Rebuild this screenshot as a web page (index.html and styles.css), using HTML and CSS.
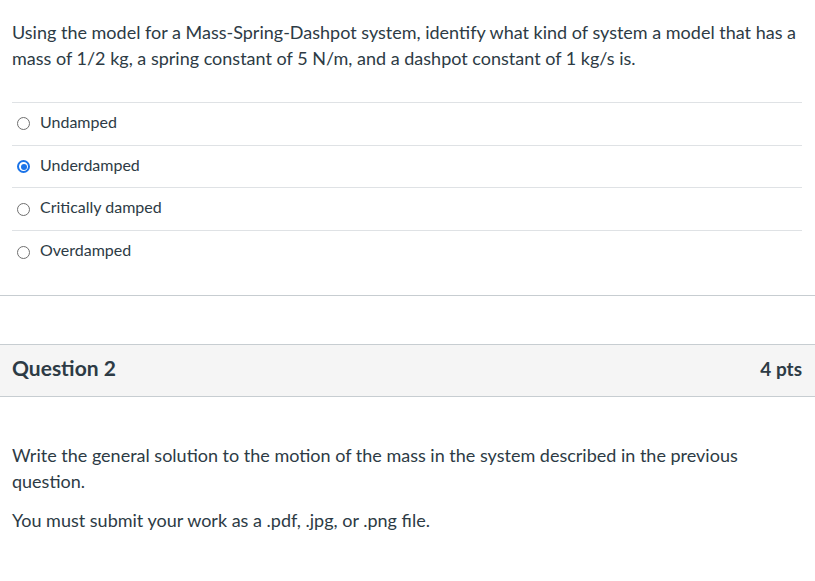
FILE: index.html
```html
<!DOCTYPE html>
<html>
<head>
<meta charset="utf-8">
<link rel="stylesheet" href="styles.css">
</head>
<body>
<div class="quiz">
  <section class="question first">
    <div class="q-text">Using the model for a Mass-Spring-Dashpot system, identify what kind of system a model that has a mass of 1/2 kg, a spring constant of 5 N/m, and a dashpot constant of 1 kg/s is.</div>
    <div class="answers">
      <label class="answer"><span class="radio"></span><span class="label">Undamped</span></label>
      <label class="answer"><span class="radio checked"></span><span class="label">Underdamped</span></label>
      <label class="answer"><span class="radio"></span><span class="label">Critically damped</span></label>
      <label class="answer"><span class="radio"></span><span class="label">Overdamped</span></label>
    </div>
  </section>
  <section class="question second">
    <header class="q-header">
      <h2 class="q-title">Question 2</h2>
      <span class="q-points">4 pts</span>
    </header>
    <div class="q-body">
      <p>Write the general solution to the motion of the mass in the system described in the previous question.</p>
      <p>You must submit your work as a .pdf, .jpg, or .png file.</p>
    </div>
  </section>
</div>
</body>
</html>
```
FILE: styles.css
```css
* { box-sizing: border-box; }
html, body {
  margin: 0;
  padding: 0;
  background: #ffffff;
  font-family: Lato, "Open Sans", "Liberation Sans", sans-serif;
  color: #2d3b45;
}
.quiz { width: 815px; }

.question.first {
  padding: 19px 13px 22.5px 12px;
  border-bottom: 1px solid #c7cdd1;
}
.q-text {
  font-size: 18px;
  line-height: 26.3px;
}
.answers {
  margin-top: 30.5px;
}
.answer {
  display: flex;
  align-items: center;
  height: 42.7px;
  border-top: 1px solid #dfe2e5;
  padding: 0 0 4px 5px;
}
.radio {
  width: 13px;
  height: 13px;
  margin-top: 4px;
  border-radius: 50%;
  border: 1px solid #6f6f6f;
  background: #fff;
  flex: none;
  position: relative;
}
.radio.checked {
  border: 2px solid #1a73e8;
}
.radio.checked::after {
  content: "";
  position: absolute;
  left: 1.5px;
  top: 1.5px;
  width: 6px;
  height: 6px;
  border-radius: 50%;
  background: #1a73e8;
}
.label {
  margin-left: 10px;
  font-size: 16px;
  line-height: 20px;
}

.question.second {
  margin-top: 48px;
}
.q-header {
  display: flex;
  justify-content: space-between;
  align-items: center;
  height: 53px;
  padding: 0 13px 0 12px;
  background: #f5f5f5;
  border-top: 1px solid #c7cdd1;
  border-bottom: 1px solid #c7cdd1;
}
.q-title {
  margin: 0 0 5px 0;
  font-size: 21px;
  font-weight: 700;
  line-height: 26px;
}
.q-points {
  margin-bottom: 3px;
  font-size: 19px;
  font-weight: 700;
  line-height: 26px;
  color: #2d3b45;
}
.q-body {
  padding: 44.5px 13px 0 12px;
  font-size: 18px;
  line-height: 26.5px;
}
.q-body p {
  margin: 0 0 12.5px 0;
}
```
